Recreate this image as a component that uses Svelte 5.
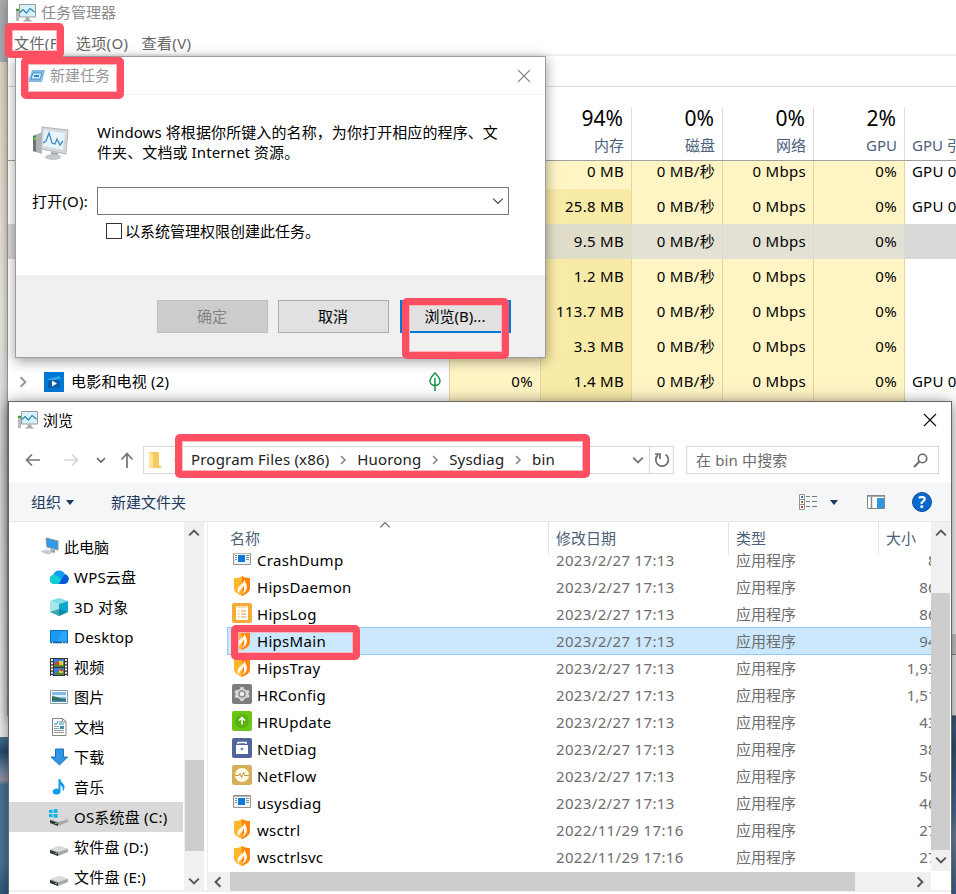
<script>
  const metrics = [
    { value: '', label: '' },
    { value: '94%', label: '内存' },
    { value: '0%', label: '磁盘' },
    { value: '0%', label: '网络' },
    { value: '2%', label: 'GPU' }
  ];

  const processes = [
    { memory: '0 MB', engine: 'GPU 0', light: true },
    { memory: '25.8 MB', engine: 'GPU 0' },
    { memory: '9.5 MB', engine: '', selected: true },
    { memory: '1.2 MB', engine: '' },
    { memory: '113.7 MB', engine: '' },
    { memory: '3.3 MB', engine: '' },
    { name: '电影和电视 (2)', cpu: '0%', memory: '1.4 MB', engine: 'GPU 0' },
    { blank: true }
  ];

  const crumbs = ['Program Files (x86)', 'Huorong', 'Sysdiag', 'bin'];

  const places = [
    { icon: 'pc', label: '此电脑', root: true },
    { icon: 'cloud', label: 'WPS云盘' },
    { icon: 'cube', label: '3D 对象' },
    { icon: 'desktop', label: 'Desktop' },
    { icon: 'video', label: '视频' },
    { icon: 'picture', label: '图片' },
    { icon: 'document', label: '文档' },
    { icon: 'download', label: '下载' },
    { icon: 'music', label: '音乐' },
    { icon: 'osdrive', label: 'OS系统盘 (C:)', selected: true },
    { icon: 'drive', label: '软件盘 (D:)' },
    { icon: 'drive', label: '文件盘 (E:)' }
  ];

  const files = [
    { icon: 'exe', name: 'CrashDump', date: '2023/2/27 17:13', size: '88 KB' },
    { icon: 'shield', name: 'HipsDaemon', date: '2023/2/27 17:13', size: '860 KB' },
    { icon: 'log', name: 'HipsLog', date: '2023/2/27 17:13', size: '860 KB' },
    { icon: 'shield', name: 'HipsMain', date: '2023/2/27 17:13', size: '944 KB', selected: true },
    { icon: 'shield', name: 'HipsTray', date: '2023/2/27 17:13', size: '1,932 KB' },
    { icon: 'gear', name: 'HRConfig', date: '2023/2/27 17:13', size: '1,511 KB' },
    { icon: 'update', name: 'HRUpdate', date: '2023/2/27 17:13', size: '432 KB' },
    { icon: 'kit', name: 'NetDiag', date: '2023/2/27 17:13', size: '388 KB' },
    { icon: 'flow', name: 'NetFlow', date: '2023/2/27 17:13', size: '560 KB' },
    { icon: 'exe', name: 'usysdiag', date: '2023/2/27 17:13', size: '460 KB' },
    { icon: 'shield', name: 'wsctrl', date: '2022/11/29 17:16', size: '277 KB' },
    { icon: 'shield', name: 'wsctrlsvc', date: '2022/11/29 17:16', size: '277 KB' }
  ];

  const marks = ['menu', 'title', 'browse', 'path', 'file'];
</script>

{#snippet monitor()}
  <svg width="20" height="18" viewBox="0 0 20 18">
    <path d="M0 4.500h3V17H0z" fill="#b9bcbe" />
    <path d="M0 5h3v2H0z" fill="#3c9f31" />
    <path d="M3.500 .500h16v12.500h-16z" fill="#d4f2fc" stroke="#999" />
    <path d="M4 8.500l3-3 3.500 3.500L14 4.500 18.500 8" fill="none" stroke="#3283ad" stroke-width="1.200" />
    <path d="M9.500 13.500h4v2l3 2H6.500l3-2z" fill="#a9a9a9" />
  </svg>
{/snippet}

{#snippet chevron(dir, size = 10, weight = 1.6)}
  <svg class="chevron {dir}" width={size} height={size} viewBox="0 0 10 10">
    <path d="M1 3l4 4 4-4" fill="none" stroke="currentColor" stroke-width={weight} />
  </svg>
{/snippet}

{#snippet icon(name)}
  <svg class="icon" width="20" height="20" viewBox="0 0 20 20">
    {#if name === 'pc'}
      <path d="M6 1l12 3v9L7 10z" fill="#2f9be8" stroke="#8a9299" />
      <path d="M10 12l5 1v3l-4-1z" fill="#9aa0a5" />
      <path d="M0 14l7-1.500 7 3-7 2z" fill="#d3d6d8" />
      <path d="M2 14.500l8 2M5 13.500l7 2" stroke="#aeb3b7" stroke-width=".6" />
    {:else if name === 'cloud'}
      <path d="M5 17a4.700 4.700 0 0 1-.8-9.200A6.300 6.300 0 0 1 16 7.200 5 5 0 0 1 15 17z" fill="#139bf3" />
      <path d="M5 17a4.700 4.700 0 0 1 0-9.300c3 0 6 3 10 9.300z" fill="#0ed1d2" />
      <path d="M9.500 17L16 7.200A5 5 0 0 1 15 17z" fill="#0757d6" />
    {:else if name === 'cube'}
      <path d="M10 1l9 3-9 3-9-3z" fill="#7ddde6" />
      <path d="M1 4l9 3v12l-9-4z" fill="#a8e5e9" />
      <path d="M19 4l-9 3v12l9-4z" fill="#12a5ca" />
      <path d="M1 15l9-3 9 3-9 4z" fill="#087f98" opacity=".65" />
    {:else if name === 'desktop'}
      <path d="M1.500 3.500h17v12h-17z" fill="#189bf4" stroke="#0874bb" />
      <path d="M8 15l6-11h4v11z" fill="#2ea5f9" />
      <path d="M2 15.500h17" stroke="#075d9a" stroke-width="1.500" />
      <path d="M3 15.500h1M13 15.500h1M16 15.500h1" stroke="#fff" />
    {:else if name === 'video'}
      <path d="M1 1h18v18H1z" fill="#333" />
      <path d="M5 2h10v8H5zM5 11h10v7H5z" fill="#3d80d2" />
      <path d="M5 7h10v3H5zM7 15h8v3H7z" fill="#4a8a38" />
      <path d="M10 4h4v4h-4zM10 13h4v3h-4z" fill="#f4c926" />
      <path d="M6 5h4v3H6zM11 12h3v2h-3z" fill="#d73c35" />
      <path d="M3 2v17M17 2v17" stroke="#eee" stroke-width="2" stroke-dasharray="2 1.200" />
    {:else if name === 'picture'}
      <path d="M1.500 3.500h17v13h-17z" fill="#fff" stroke="#969ba0" />
      <path d="M3 5h14v10H3z" fill="#7ebcf0" />
      <path d="M3 8h14v2H3z" fill="#e0f1fb" />
      <path d="M3 9c4 0 7 3 14 3v2H3z" fill="#37705a" />
      <path d="M3 13.500h14V15H3z" fill="#3c89c6" />
    {:else if name === 'document'}
      <path d="M3.500 1.500h10l3.500 3v14H3.500z" fill="#fff" stroke="#858585" />
      <path d="M13.500 1.500v3.500H17" fill="none" stroke="#858585" />
      <path d="M5 7h3l1-3M10 5h3M10 7h5" stroke="#2f8fc0" fill="none" />
      <path d="M5 9.500h5M5 11.500h5M5 13.500h10M5 15.500h10" stroke="#999" />
      <path d="M11 9h4v3h-4z" fill="#3d8bb4" />
    {:else if name === 'download'}
      <path d="M6.500 2h8v8h4L10.500 18 2 10h4.500z" fill="#3294e5" stroke="#1d72b8" />
    {:else if name === 'music'}
      <path d="M9.500 2h2c0 4 4 4 4 8 0 2-1 4-2 4 1-4-1-5-2-6v7a4 3 0 1 1-2-3z" fill="#109bed" />
    {:else if name === 'osdrive' || name === 'drive'}
      <path d="M1 13l9-4 9 3v3l-10 4-8-3z" fill="#a7a9aa" />
      <path d="M1 12l9-3 9 3-10 3z" fill="#dadbdc" />
      <path d="M1 13l8 3v3l-8-3z" fill="#34383a" />
      <path d="M6 16h2v1H6z" fill="#5bd35b" />
      {#if name === 'osdrive'}
        <path d="M0 3l3.500-.5V6H0zM4.500 2.300L8.500 2v4h-4zM0 7h3.500v3.500L0 10zM4.500 7h4v4l-4-.5z" fill="#12b4ed" />
      {/if}
    {:else if name === 'exe'}
      <path d="M1.500 3.500h17v12h-17z" fill="#f4f4f4" stroke="#90959a" />
      <path d="M2 4h16" stroke="#7b8085" />
      <path d="M6 6h7v7H6z" fill="#087bdc" />
      <path d="M3 6.500h2M3 8.500h2M3 10.500h2M14 6.500h3M14 8.500h3M14 10.500h3" stroke="#858b90" />
    {:else if name === 'shield'}
      <path d="M10 0c3 2 5 2 8 2v10c0 4-4 6-8 8-4-2-8-4-8-8V2c3 0 5 0 8-2z" fill="#ffb62b" />
      <path d="M10 0c3 2 5 2 8 2v10c0 4-4 6-8 8z" fill="#ff8511" />
      <path d="M12 3c2 4-6.500 6-6.500 11 0 1.500.5 2.500 1.500 3.500 0-4 4-4 4.500-8 1.500 3 .5 6-1.500 8.500 3-1.500 5-4 5-7 0-3-2-5-3-8z" fill="#fff7e8" />
    {:else if name === 'log'}
      <rect width="20" height="20" rx="2" fill="#f7ab36" />
      <rect x="4" y="3" width="12" height="14" rx="1" fill="#fff" />
      <path d="M6 8h1.500M9 8h5M6 11h1.500M9 11h5M6 14h1.500M9 14h5" stroke="#eaa134" />
      <path d="M5 4h10" stroke="#f5bd63" />
    {:else if name === 'gear'}
      <rect width="20" height="20" rx="2" fill="#7d7d7d" />
      <path d="M8.500 3h3l.7 2 2.300 1.200 2-.3 1 2.300-1.300 1.800 1.300 1.800-1 2.300-2-.3-2.300 1.200-.7 2h-3l-.7-2-2.300-1.200-2 .3-1-2.300L3.800 10 2.500 8.200l1-2.300 2 .3L7.800 5z" fill="#d6d6d6" />
      <circle cx="10" cy="10" r="3" fill="#eee" stroke="#8d8d8d" stroke-width="1.500" />
    {:else if name === 'update'}
      <rect width="20" height="20" rx="2" fill="#6cc513" />
      <circle cx="10" cy="10" r="7" fill="#5cb010" />
      <path d="M10 13.500V7M7 9.500L10 6.500l3 3" fill="none" stroke="#fff" stroke-width="1.500" />
    {:else if name === 'kit'}
      <rect width="20" height="20" rx="2" fill="#52649b" />
      <path d="M6 6V4.500h8V6" fill="none" stroke="#fff" stroke-width="1.500" />
      <path d="M4 7h12v9H4z" fill="#fff" />
      <path d="M8.500 11h3M10 9.500v3" stroke="#52649b" />
    {:else if name === 'flow'}
      <rect width="20" height="20" rx="2" fill="#d6b058" />
      <circle cx="10" cy="10" r="7" fill="#fff8e8" />
      <path d="M3 10.500h4l1-2 1.500 4 2-5 1 3H17" fill="none" stroke="#c99b40" />
    {/if}
  </svg>
{/snippet}

<main class="screen">
  <section class="task-manager">
    <div class="tm-title">{@render monitor()}<span>任务管理器</span></div>
    <div class="tm-menu"><span>文件(F)</span><span>选项(O)</span><span>查看(V)</span></div>
    <div class="tm-tabs"></div>
    <div class="tm-head tm-grid">
      <div></div>
      {#each metrics as metric}
        <div class="metric"><b>{metric.value}</b><span>{metric.label}</span></div>
      {/each}
      <div class="engine">GPU 引擎</div>
    </div>
    <div class="tm-rows">
      {#each processes as row}
        <div class="tm-row tm-grid" class:selected={row.selected}>
          <div class="process">
            {#if row.name}
              {@render chevron('right', 12)}
              <svg class="film" width="20" height="20" viewBox="0 0 20 20">
                <path d="M0 0h20v20H0z" fill="#0078d4" />
                <path d="M4 7l12-3v3L4 9z" fill="#29a8ee" />
                <path d="M4 8h12v8H4z" fill="#075eaa" />
                <path d="M8 8.500l5 3-5 3z" fill="#fff" />
              </svg>
              <span>{row.name}</span>
              <svg class="leaf" width="14" height="20" viewBox="0 0 14 20">
                <path d="M7 1c3 3 5 5 5 8 0 6-10 6-10 0 0-3 2-5 5-8zM7 6v13" fill="none" stroke="#16924c" stroke-width="1.500" />
              </svg>
            {/if}
          </div>
          <div class="cell">{row.cpu ?? ''}</div>
          <div class="cell memory" class:light={row.light}>{row.memory ?? ''}</div>
          <div class="cell">{row.blank ? '' : '0 MB/秒'}</div>
          <div class="cell">{row.blank ? '' : '0 Mbps'}</div>
          <div class="cell">{row.blank ? '' : '0%'}</div>
          <div class="engine-cell">{row.engine ?? ''}</div>
        </div>
      {/each}
    </div>
    <div class="tm-scroll"></div>
    <div class="tm-footer"></div>
  </section>

  <section class="run-dialog">
    <header>
      <svg width="17" height="16" viewBox="0 0 17 16">
        <path d="M4 2h13l-3 12H0z" fill="#83bde6" />
        <path d="M5 5h9l-2 6H3z" fill="#d3ebfa" stroke="#4b94cc" />
        <path d="M6 8h5" stroke="#3486c4" stroke-width="2" />
      </svg>
      <span>新建任务</span>
      <svg class="close" width="14" height="14" viewBox="0 0 14 14"><path d="M1 1l12 12M13 1L1 13" stroke="#888" stroke-width="1.100" /></svg>
    </header>
    <div class="run-body">
      <div class="intro">
        <svg width="38" height="36" viewBox="0 0 38 36">
          <path d="M1 10l9-4v22L1 25z" fill="#b0b3b5" />
          <path d="M1 10l3-1v17l-3-1z" fill="#707477" />
          <path d="M2 11h2v3H2z" fill="#50d22e" />
          <path d="M10 1l26 3-2 24-25-5z" fill="#d5d7d8" stroke="#b4b7b9" />
          <path d="M12 4l21 3-2 17-20-4z" fill="#e4f4fc" />
          <path d="M11 17l3-2 3-8 3 10 3 1 2-5 3 6 3-4" fill="none" stroke="#438dbc" stroke-width="1.300" />
          <path d="M19 26l7 1v4h-7z" fill="#a1a4a6" />
          <ellipse cx="21" cy="31" rx="8" ry="3" fill="#c5c8ca" />
        </svg>
        <p>Windows 将根据你所键入的名称，为你打开相应的程序、文<br />件夹、文档或 Internet 资源。</p>
      </div>
      <div class="open-row"><label for="command">打开(O):</label><div class="combo" id="command">{@render chevron('down', 12, 1)}</div></div>
      <div class="admin"><i></i><span>以系统管理权限创建此任务。</span></div>
    </div>
    <footer>
      <button disabled>确定</button>
      <button>取消</button>
      <button class="primary">浏览(B)...</button>
    </footer>
  </section>

  <section class="browse">
    <header>
      {@render monitor()}<span>浏览</span>
      <svg class="close" width="14" height="14" viewBox="0 0 14 14"><path d="M1 1l12 12M13 1L1 13" stroke="#111" stroke-width="1.200" /></svg>
    </header>
    <nav class="address-row">
      <svg class="arrow" width="16" height="16" viewBox="0 0 16 16"><path d="M15 8H2M7 2.500L1.500 8 7 13.500" /></svg>
      <svg class="arrow next" width="16" height="16" viewBox="0 0 16 16"><path d="M1 8h13M9 2.500L14.500 8 9 13.500" /></svg>
      <span class="history">{@render chevron('down', 10)}</span>
      <svg class="arrow up-arrow" width="16" height="16" viewBox="0 0 16 16"><path d="M8 16V2M2.500 7.500L8 1.500l5.500 6" /></svg>
      <div class="address">
        <svg width="14" height="18" viewBox="0 0 14 18"><path d="M1 1h10v13l2 1v2H1z" fill="#f4cb61" /><path d="M1 1l4 2v15l-4-2z" fill="#ffe69c" /></svg>
        <small>«</small>
        {#each crumbs as crumb, i}
          <span>{crumb}</span>
          {#if i < crumbs.length - 1}<em>{@render chevron('right', 10)}</em>{/if}
        {/each}
        <i class="drop">{@render chevron('down', 12)}</i>
        <i class="refresh">
          <svg width="16" height="16" viewBox="0 0 16 16"><path d="M11.500 2.500A6.300 6.300 0 1 1 4 3M1 2h5v5" fill="none" stroke="#6d6d6d" stroke-width="1.700" /></svg>
        </i>
      </div>
      <div class="search">
        <span>在 bin 中搜索</span>
        <svg width="15" height="15" viewBox="0 0 15 15"><circle cx="9.500" cy="5.500" r="4.200" fill="none" stroke="#686868" stroke-width="1.600" /><path d="M6.500 8.500L1 14" stroke="#686868" stroke-width="2" /></svg>
      </div>
    </nav>
    <div class="tools">
      <span>组织</span><i class="triangle"></i><span class="new-folder">新建文件夹</span>
      <svg class="view" width="19" height="16" viewBox="0 0 19 16">
        <path d="M.5.5h5v15h-5zM.500 5.500h5M.500 10.500h5" fill="#fff" stroke="#929292" />
        <path d="M2 2h2v2H2z" fill="#3e78a5" /><path d="M2 7h2v2H2z" fill="#807542" /><path d="M2 12h2v2H2z" fill="#b54132" />
        <path d="M7 2.500h4M13 2.500h5M7 7.500h4M13 7.500h5M7 12.500h4M13 12.500h5" stroke="#777" />
      </svg>
      <i class="triangle"></i>
      <svg class="pane" width="18" height="14" viewBox="0 0 18 14"><path d="M.5.5h17v13H.5z" fill="#fff" stroke="#808589" /><path d="M0 1h18M4.500 2v11" stroke="#858a8e" stroke-width="1.500" /><path d="M10 3h7v10h-7z" fill="#3197df" /></svg>
      <b class="help">?</b>
    </div>
    <div class="explorer">
      <aside>
        {#each places as place}
          <div class="place" class:root={place.root} class:selected={place.selected}>{@render icon(place.icon)}<span>{place.label}</span></div>
        {/each}
      </aside>
      <div class="scroll side-scroll">{@render chevron('up', 12)}<i></i>{@render chevron('down', 12)}</div>
      <div class="list">
        <div class="file-head file-grid">
          <span class="sort">{@render chevron('up', 12, 1)}</span>
          <span>名称</span><span>修改日期</span><span>类型</span><span>大小</span>
        </div>
        <div class="files">
          {#each files as file}
            <div class="file file-grid" class:selected={file.selected}>
              <span class="name">{@render icon(file.icon)}{file.name}</span>
              <span class="date">{file.date}</span><span>应用程序</span><span class="size">{file.size}</span>
            </div>
          {/each}
        </div>
        <div class="scroll bottom-scroll">{@render chevron('left', 12)}<i></i>{@render chevron('right', 12)}</div>
      </div>
      <div class="scroll list-scroll">{@render chevron('up', 12)}<i></i>{@render chevron('down', 12)}</div>
    </div>
  </section>

  {#each marks as mark}
    <div class="mark {mark}-mark"></div>
  {/each}
</main>

<style>
  :global(*) {
    box-sizing: border-box;
  }

  .screen {
    position: relative;
    width: 956px;
    height: 894px;
    overflow: hidden;
    background:
      linear-gradient(#4a7298, #2b5578 30px, #4a759b 100px, #7088a8 120px, #3d698f) right 0 top 715px / 10px 180px no-repeat,
      linear-gradient(#aaa9ae 0 62px, #ded2bd 62px, #e8e5df 320px, #ddd 460px, #f5f5f5 737px, #487495 737px, #254f72 752px, #718aa7 770px, #9c99a6 780px, #49789d 785px, #507ba0 860px, #315e85 894px);
    color: #000;
    font: 15px/20px 'Noto Sans', 'Noto Sans CJK SC', sans-serif;
    white-space: nowrap;
  }

  svg {
    display: block;
    flex: none;
  }

  i,
  em {
    font-style: normal;
  }

  .chevron.up {
    transform: rotate(180deg);
  }

  .chevron.right {
    transform: rotate(-90deg);
  }

  .chevron.left {
    transform: rotate(90deg);
  }

  .task-manager {
    position: absolute;
    left: 7px;
    top: 0;
    width: 1000px;
    height: 716px;
    border: solid #929292;
    border-width: 0 0 1px 1px;
    background: #fff;
    box-shadow: 0 3px 9px #0005;
  }

  .tm-title {
    display: flex;
    gap: 5px;
    height: 31px;
    padding: 4px 0 0 8px;
    color: #8c8c8c;
  }

  .tm-title span {
    margin-top: -2px;
  }

  .tm-menu {
    display: flex;
    gap: 13px;
    height: 25px;
    padding: 2px 0 0 6px;
    border-bottom: 2px solid #f0f0f0;
    color: #666;
    letter-spacing: 0.4px;
  }

  .tm-tabs {
    height: 31px;
    border-bottom: 1px solid #d9d9d9;
  }

  .tm-grid {
    display: grid;
    grid-template-columns: 442px repeat(5, 91px) 1fr;
  }

  .tm-head {
    height: 74px;
    padding-top: 20px;
    border-bottom: 1px solid #a0a0a0;
    color: #4c607a;
  }

  .metric {
    border-right: 1px solid #ddd;
    padding-right: 7px;
    text-align: right;
  }

  .metric b {
    display: block;
    height: 28px;
    padding-right: 1px;
    color: #000;
    font-size: 21px;
    font-weight: 400;
    line-height: 22px;
  }

  .engine {
    padding: 28px 0 0 7px;
  }

  .tm-rows {
    height: 473px;
    overflow: hidden;
  }

  .tm-row {
    height: 35px;
    line-height: 35px;
  }

  .tm-row:first-child {
    margin-top: -7px;
  }

  .process {
    display: flex;
    align-items: center;
    padding: 0 0 1px 9px;
    border-right: 1px solid #e7d49c;
    color: #000;
  }

  .process span {
    letter-spacing: 0.2px;
  }

  .process .chevron {
    color: #999;
  }

  .film {
    margin: 0 7px 0 15px;
  }

  .leaf {
    margin: 0 7px 0 auto;
  }

  .cell {
    padding-right: 7px;
    border-right: 1px solid #e7d49c;
    background: #fff4c4;
    letter-spacing: 0.3px;
    text-align: right;
  }

  .memory {
    background: #f8eba8;
  }

  .memory.light {
    background: #fff4c4;
  }

  .engine-cell {
    padding-left: 7px;
    letter-spacing: 0.2px;
  }

  .tm-row.selected,
  .tm-row.selected .engine-cell {
    background: #d9d9d9;
  }

  .tm-row.selected .cell {
    border-color: #d9dbd9;
    background: #e3e1d4;
  }

  .tm-row.selected .memory {
    background: #e0ddca;
  }

  .tm-scroll {
    height: 20px;
    background: #ccc;
  }

  .tm-footer {
    height: 61px;
    border-top: 1px solid #888;
    background: #eee;
  }

  .run-dialog {
    position: absolute;
    left: 15px;
    top: 56px;
    width: 531px;
    height: 302px;
    border: 1px solid #9c9c9c;
    background: #fff;
    box-shadow: 0 3px 12px #0006;
  }

  .run-dialog header {
    display: flex;
    align-items: center;
    gap: 5px;
    height: 38px;
    padding: 0 14px 0 12px;
    border-bottom: 1px solid #eee;
    color: #999;
  }

  .run-dialog header span {
    margin-top: -2px;
  }

  .close {
    margin-left: auto;
  }

  .run-body {
    height: 180px;
    padding-top: 27px;
  }

  .intro {
    display: flex;
    gap: 27px;
    height: 42px;
    padding-left: 16px;
  }

  .intro svg {
    margin-top: 4px;
  }

  .intro p {
    margin: 0;
    letter-spacing: 0.1px;
  }

  .open-row {
    display: flex;
    align-items: center;
    height: 28px;
    margin: 23px 0 0 16px;
  }

  .open-row label {
    width: 65px;
    letter-spacing: 0.2px;
  }

  .combo {
    display: flex;
    align-items: center;
    justify-content: flex-end;
    width: 412px;
    height: 28px;
    padding-right: 4px;
    border: 1px solid #777;
    color: #444;
  }

  .admin {
    display: flex;
    align-items: center;
    gap: 3px;
    margin: 6px 0 0 90px;
  }

  .admin i {
    width: 16px;
    height: 16px;
    border: 1px solid #333;
  }

  .run-dialog footer {
    display: flex;
    gap: 10px;
    height: 82px;
    padding: 25px 0 0 141px;
    background: #f0f0f0;
  }

  button {
    width: 111px;
    height: 33px;
    padding: 0 1px 2px 0;
    border: 1px solid #adadad;
    background: #e1e1e1;
    color: #000;
    font: inherit;
  }

  button:disabled {
    border-color: #bfbfbf;
    background: #ccc;
    color: #838383;
  }

  button.primary {
    margin-left: 1px;
    border: 2px solid #0078d7;
  }

  .browse {
    position: absolute;
    left: 8px;
    top: 401px;
    width: 944px;
    height: 520px;
    border: 1px solid #666;
    background: #fff;
    box-shadow: 0 2px 14px #0008;
  }

  .browse header {
    display: flex;
    align-items: center;
    gap: 5px;
    height: 37px;
    padding: 0 14px 2px 9px;
  }

  .address-row {
    display: flex;
    align-items: center;
    height: 44px;
    padding: 0 12px 2px 16px;
    color: #666;
  }

  .arrow {
    fill: none;
    stroke: #747474;
    stroke-width: 1.7;
  }

  .arrow.next {
    margin-left: 22px;
    stroke: #d5d5d5;
  }

  .history {
    margin: 0 13px 0 17px;
  }

  .address {
    display: flex;
    flex: none;
    align-items: center;
    width: 531px;
    height: 28px;
    margin: 0 12px 0 8px;
    padding-left: 4px;
    border: 1px solid #d9d9d9;
    color: #222;
  }

  .address span {
    margin-top: -2px;
    letter-spacing: 0.2px;
  }

  .address small {
    width: 29px;
    padding-left: 12px;
    color: #777;
  }

  .address em {
    margin: 0 9px 0 8.700px;
    color: #888;
  }

  .drop {
    margin: 0 5px 0 auto;
    color: #777;
  }

  .refresh {
    display: flex;
    align-items: center;
    width: 24px;
    height: 26px;
    padding-left: 4px;
    border-left: 1px solid #d9d9d9;
  }

  .search {
    display: flex;
    flex: none;
    align-items: center;
    justify-content: space-between;
    width: 253px;
    height: 28px;
    padding: 0 10px 0 9px;
    border: 1px solid #d9d9d9;
    color: #6d6d6d;
  }

  .search span {
    letter-spacing: 0.15px;
  }

  .tools {
    display: flex;
    align-items: center;
    height: 39px;
    padding: 0 19px 0 22px;
    border-bottom: 1px solid #e6e8ea;
    background: #f5f6f8;
    color: #1e395b;
  }

  .triangle {
    width: 0;
    margin-left: 5px;
    border: solid transparent;
    border-width: 5px 4px 0;
    border-top-color: #1e395b;
  }

  .new-folder {
    margin-left: 37px;
  }

  .view {
    margin-left: auto;
  }

  .view + .triangle {
    margin-left: 12px;
  }

  .pane {
    margin: 0 27px 0 29px;
  }

  .help {
    width: 20px;
    height: 20px;
    border: 1px solid #07509b;
    border-radius: 50%;
    background: #0868cd;
    color: #fff;
    font-size: 16px;
    line-height: 18px;
    text-align: center;
  }

  .explorer {
    display: grid;
    grid-template-columns: 175px 20px 1fr 20px;
    height: 370px;
    border-bottom: 2px solid #eee;
  }

  aside {
    padding-top: 10px;
    overflow: hidden;
  }

  .place {
    display: flex;
    align-items: center;
    gap: 5px;
    width: 174px;
    height: 30px;
    padding-left: 40px;
    letter-spacing: 0.2px;
  }

  .place.root {
    gap: 4px;
    padding-left: 31px;
    letter-spacing: 0;
  }

  .place.selected {
    background: #d9d9d9;
  }

  .scroll {
    display: flex;
    flex-direction: column;
    align-items: center;
    padding: 5px 1px;
    background: #f0f0f0;
    color: #555;
  }

  .scroll i {
    width: 19px;
    background: #cdcdcd;
  }

  .side-scroll i {
    height: 91px;
    margin: 221px 0 24px;
  }

  .list-scroll {
    height: 349px;
    margin-right: 1px;
  }

  .list-scroll i {
    height: 257px;
    margin: 54px 0 4px;
  }

  .list {
    margin-left: 3px;
    border-left: 1px solid #eee;
    overflow: hidden;
  }

  .file-grid {
    display: grid;
    grid-template-columns: 321px 180px 150px 90px;
  }

  .file-head {
    position: relative;
    height: 31px;
    margin-left: 20px;
    color: #4c607a;
    line-height: 33px;
  }

  .sort {
    position: absolute;
    left: 151px;
    top: -3px;
  }

  .file-head .chevron {
    color: #666;
  }

  .file-head > span:not(.sort) {
    padding-left: 7px;
    border-right: 1px solid #e5e5e5;
  }

  .file-head > span:nth-child(2) {
    padding-left: 2px;
  }

  .files {
    height: 319px;
    overflow: hidden;
    padding-left: 19px;
  }

  .file {
    width: 742px;
    height: 27px;
    padding-left: 1px;
    line-height: 28px;
    color: #6d6d6d;
  }

  .file:first-child {
    margin-top: -7px;
  }

  .file > span {
    padding-left: 7px;
  }

  .file .name {
    display: flex;
    gap: 5px;
    padding-left: 4px;
    color: #000;
    letter-spacing: 0.3px;
  }

  .file .icon {
    margin-top: 3px;
  }

  .file .date {
    letter-spacing: 0.35px;
  }

  .file .size {
    padding-right: 1px;
    text-align: right;
  }

  .file.selected {
    height: 28px;
    margin-bottom: -1px;
    box-shadow: inset 0 0 0 1px #91c9f7;
    background: #cce8ff;
  }

  .bottom-scroll {
    flex-direction: row;
    height: 19px;
    padding: 0 5px 0 4px;
  }

  .bottom-scroll i {
    width: 625px;
    height: 19px;
    margin: 0 auto 0 6px;
  }

  .mark {
    position: absolute;
    border: 7px solid #ff5063;
    border-radius: 5px;
    box-shadow: inset 0 0 0 1px #ffb5be;
  }

  .menu-mark {
    left: 5px;
    top: 23px;
    width: 59px;
    height: 35px;
  }

  .title-mark {
    left: 21px;
    top: 57px;
    width: 103px;
    height: 42px;
  }

  .browse-mark {
    left: 402px;
    top: 298px;
    width: 107px;
    height: 61px;
  }

  .path-mark {
    left: 175px;
    top: 434px;
    width: 415px;
    height: 44px;
  }

  .file-mark {
    left: 231px;
    top: 625px;
    width: 129px;
    height: 35px;
  }
</style>
